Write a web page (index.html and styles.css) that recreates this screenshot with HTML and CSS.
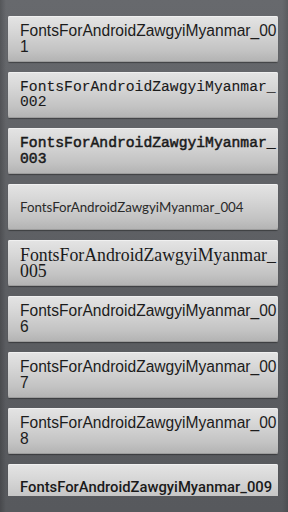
FILE: index.html
```html
<!DOCTYPE html>
<html lang="en">
    <head>
        <meta charset="UTF-8">
        <meta name="viewport" content="width=device-width, initial-scale=1.0">
        <title>Fonts For Android Zawgyi Myanmar</title>
        <link rel="stylesheet" href="styles.css">
    </head>
    <body>
        <div class="font-list">
            <button class="font-btn font-sans">FontsForAndroidZawgyiMyanmar_001</button>
            <button class="font-btn font-mono">FontsForAndroidZawgyiMyanmar_002</button>
            <button class="font-btn font-mono-dark">FontsForAndroidZawgyiMyanmar_003</button>
            <button class="font-btn font-thin">FontsForAndroidZawgyiMyanmar_004</button>
            <button class="font-btn font-serif">FontsForAndroidZawgyiMyanmar_005</button>
            <button class="font-btn font-sans">FontsForAndroidZawgyiMyanmar_006</button>
            <button class="font-btn font-sans">FontsForAndroidZawgyiMyanmar_007</button>
            <button class="font-btn font-sans">FontsForAndroidZawgyiMyanmar_008</button>
            <button class="font-btn font-medium">FontsForAndroidZawgyiMyanmar_009</button>
        </div>
    </body>
</html>
```

FILE: styles.css
```css
html, body {
    height: 100%;
}
body {
    margin: 0;
    background-color: #5e6064;
    background-image:
        linear-gradient(90deg, rgba(0,0,0,0.18) 0, rgba(0,0,0,0) 6px, rgba(0,0,0,0) 282px, rgba(0,0,0,0.12) 288px),
        linear-gradient(180deg, #67696d 0%, #5d5f63 50%, #57595d 100%);
    font-family: "Noto Sans", sans-serif;
    overflow: hidden;
}
.font-list {
    height: 496px;
    overflow: hidden;
    box-sizing: border-box;
    padding: 16px 10px 0 8px;
    display: flex;
    flex-direction: column;
    gap: 10px;
}
/* each row is one font preview */
.font-btn {
    flex: none;
    display: block;
    width: 270px;
    height: 46px;
    margin: 0;
    padding: 0 1px 0 12px;
    border: none;
    border-radius: 2px;
    background: linear-gradient(180deg, #e4e4e4 0%, #d8d8d8 30%, #c3c3c3 75%, #b2b2b2 100%);
    box-shadow: inset 0 1px 0 #f0f0f0, inset 0 -1px 0 #9c9c9c, 0 1px 1px rgba(0,0,0,0.35);
    color: #1c1c1c;
    text-align: left;
    word-break: break-all;
    cursor: pointer;
}
.font-sans {
    font-family: "Liberation Sans", Arial, sans-serif;
    font-size: 15.6px;
    line-height: 16px;
}
.font-mono {
    font-family: "Liberation Mono", monospace;
    font-size: 14.7px;
    line-height: 15px;
    color: #1a1a1a;
    -webkit-text-stroke: 0.1px #1a1a1a;
}
.font-mono-dark {
    font-family: "Liberation Mono", monospace;
    font-size: 14.7px;
    line-height: 16px;
    color: #1a1a1a;
    -webkit-text-stroke: 0.5px #1a1a1a;
}
.font-thin {
    font-family: Lato, sans-serif;
    font-weight: 400;
    font-size: 13.3px;
    color: #2a2a2a;
}
.font-serif {
    font-family: "Liberation Serif", serif;
    font-size: 17.8px;
    line-height: 16px;
    color: #1a1a1a;
}
.font-medium {
    font-family: Roboto, sans-serif;
    font-weight: 500;
    font-size: 14.8px;
    color: #1a1a1a;
}
```
